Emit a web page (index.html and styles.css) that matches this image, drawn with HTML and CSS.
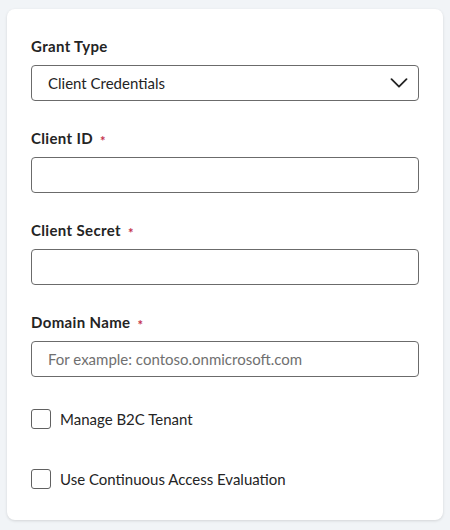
FILE: index.html
```html
<!DOCTYPE html>
<html lang="en">
<head>
<meta charset="utf-8">
<title>Grant settings</title>
<link rel="stylesheet" href="styles.css">
</head>
<body>
<div class="card">
  <div class="field">
    <label class="label">Grant Type</label>
    <div class="select">
      <span class="select-value">Client Credentials</span>
      <svg class="chevron" width="18" height="10" viewBox="0 0 18 10"><path d="M1.5 1.2 L9 8.7 L16.5 1.2" fill="none" stroke="#242424" stroke-width="1.8" stroke-linecap="round" stroke-linejoin="round"/></svg>
    </div>
  </div>
  <div class="field">
    <label class="label">Client ID <span class="req">*</span></label>
    <div class="input"></div>
  </div>
  <div class="field">
    <label class="label">Client Secret <span class="req">*</span></label>
    <div class="input"></div>
  </div>
  <div class="field">
    <label class="label">Domain Name <span class="req">*</span></label>
    <div class="input"><span class="placeholder">For example: contoso.onmicrosoft.com</span></div>
  </div>
  <div class="checks">
    <div class="check"><span class="box"></span><span class="check-text">Manage B2C Tenant</span></div>
    <div class="check"><span class="box"></span><span class="check-text">Use Continuous Access Evaluation</span></div>
  </div>
</div>
</body>
</html>
```
FILE: styles.css
```css
html, body {
  margin: 0;
  padding: 0;
}
body {
  background: #f1f4f7;
  font-family: Lato, "Liberation Sans", sans-serif;
  color: #242424;
  padding: 9px 7px 0 7px;
  height: 530px;
  box-sizing: border-box;
}
.card {
  background: #ffffff;
  border-radius: 8px;
  box-shadow: 0 1px 3px rgba(0, 0, 0, 0.13);
  padding: 27px 24px 31px 24px;
  display: flex;
  flex-direction: column;
  gap: 27px;
}
.field {
  display: flex;
  flex-direction: column;
  gap: 9px;
}
.label {
  display: block;
  height: 20px;
  font-size: 15px;
  font-weight: 700;
  letter-spacing: 0.35px;
  line-height: 20px;
  color: #242424;
}
.req {
  color: #c4314b;
  font-size: 13px;
  line-height: 0;
  margin-left: 3px;
  position: relative;
  top: 2px;
}
.select, .input {
  height: 36px;
  box-sizing: border-box;
  border: 1px solid #6b6b6b;
  border-radius: 4px;
  display: flex;
  align-items: center;
  padding: 0 10px 0 16px;
  font-size: 15px;
}
.select {
  justify-content: space-between;
}
.select-value {
  color: #242424;
}
.chevron {
  display: block;
}
.placeholder {
  color: #707070;
}
.checks {
  display: flex;
  flex-direction: column;
  gap: 40px;
  margin-top: 5px;
}
.check {
  display: flex;
  align-items: center;
  gap: 9px;
  height: 20px;
}
.box {
  width: 20px;
  height: 20px;
  box-sizing: border-box;
  border: 1px solid #616161;
  border-radius: 3px;
  background: #fff;
}
.check-text {
  font-size: 15px;
  color: #242424;
}
```
